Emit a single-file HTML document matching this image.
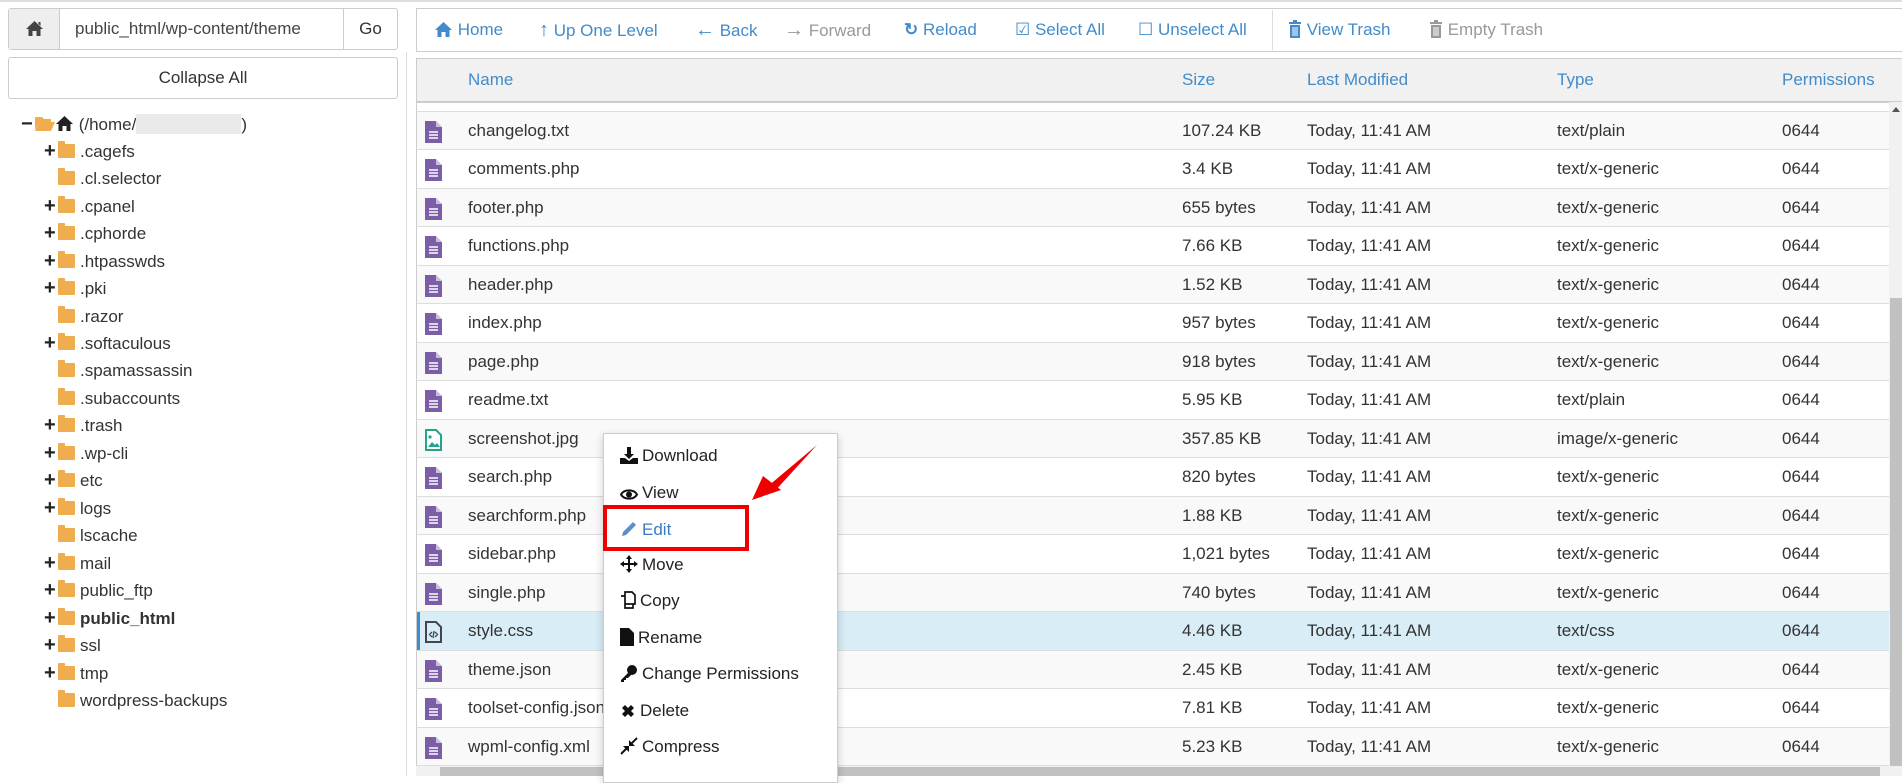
<!DOCTYPE html>
<html><head><meta charset="utf-8"><style>
*{box-sizing:border-box;margin:0;padding:0}
body{width:1902px;height:776px;overflow:hidden;background:#fff;font-family:"Liberation Sans",sans-serif;color:#333;position:relative;font-size:17px}
.a{position:absolute}
.topline{left:0;top:0;width:1902px;height:2px;background:#ddd}
.ig{left:8px;top:8px;width:390px;height:42px;border:1px solid #ccc;border-radius:3px;background:#fff}
.btn{left:8px;top:57px;width:390px;height:42px;border:1px solid #ccc;border-radius:3px;text-align:center;line-height:40px}
.tree div{position:absolute;height:27px;line-height:27px;white-space:nowrap}
.fold{display:inline-block;width:17px;height:14px;background:#f0ad4e;border-radius:1px;vertical-align:-1px;margin-right:5px;position:relative}
.fold:before{content:"";position:absolute;left:0;top:-3px;width:7px;height:4px;background:#f0ad4e;border-radius:1px 1px 0 0}
.pl{display:inline-block;width:14px;font-weight:bold;font-size:20px;color:#222}
.tb{left:416px;top:8px;width:1486px;height:44px;border:1px solid #ccc;border-right:none}
.tb span{position:absolute;top:0;line-height:42px;color:#428bca;white-space:nowrap}
.tb span.g{color:#999}
.tb svg{vertical-align:-3px}
.hdr{left:416px;top:58px;width:1486px;height:45px;background:#f1f1f1;border:1px solid #ccc;border-right:none;border-bottom:2px solid #ccc}
.hdr span{position:absolute;top:0;line-height:42px;color:#428bca}
.row{position:absolute;left:416px;width:1473px;height:38.5px;border-bottom:1px solid #ddd;border-left:1px solid #ccc}
.row span{position:absolute;line-height:38px;top:0;white-space:nowrap}
.fi{position:absolute;left:7px;top:9px}
.menu{left:603px;top:433px;width:235px;height:350px;background:#fff;border:1px solid #ccc;box-shadow:0 3px 8px rgba(0,0,0,.2)}
.mi{position:absolute;left:16px;white-space:nowrap;line-height:36px;height:36px;color:#222}
.mi i{display:inline-block;width:22px;font-style:normal;font-size:17px;font-weight:bold;color:#111}
.mi svg{vertical-align:-3px;margin-right:4px}
</style></head><body>
<div class="a topline"></div>
<div class="a ig">
 <div class="a" style="left:0;top:0;width:51px;height:40px;background:#eee;border-right:1px solid #ccc"></div>
 <svg class="a" style="left:16px;top:11px" width="19" height="17" viewBox="0 0 19 17"><path d="M9.5 1 L1 9 H3.5 V16 H7.5 V11 H11.5 V16 H15.5 V9 H18 Z M13.5 2 H15.5 V6 L13.5 4Z" fill="#444"/></svg>
 <div class="a" style="left:66px;top:0;line-height:40px;width:276px;overflow:hidden;white-space:nowrap;color:#444">public_html/wp-content/theme</div>
 <div class="a" style="left:334px;top:0;width:54px;height:40px;border-left:1px solid #ccc;line-height:40px;text-align:center">Go</div>
</div>
<div class="a btn">Collapse All</div>
<div class="a" style="left:406px;top:52px;width:1px;height:724px;background:#ddd"></div>
<div class="a tree" style="left:0;top:0">
 <div style="left:21px;top:111px"><span class="pl">−</span><svg width="20" height="15" viewBox="0 0 20 15" style="vertical-align:-1px"><path d="M0 1h7l2 2h7v3H4L0 14z" fill="#f0ad4e"/><path d="M4 6h16l-4 9H0z" fill="#f0ad4e"/></svg><svg width="19" height="17" viewBox="0 0 19 17" style="vertical-align:-2px"><path d="M9.5 1 L1 9 H3.5 V16 H7.5 V11 H11.5 V16 H15.5 V9 H18 Z" fill="#222"/></svg> (/home/<span style="display:inline-block;width:105px;height:20px;background:#eaeaea;vertical-align:-4px;position:static"></span>)</div>
 <div style="left:44px;top:138px"><span class="pl">+</span><span class="fold"></span>.cagefs</div>
 <div style="left:58px;top:165px"><span class="fold"></span>.cl.selector</div>
 <div style="left:44px;top:193px"><span class="pl">+</span><span class="fold"></span>.cpanel</div>
 <div style="left:44px;top:220px"><span class="pl">+</span><span class="fold"></span>.cphorde</div>
 <div style="left:44px;top:248px"><span class="pl">+</span><span class="fold"></span>.htpasswds</div>
 <div style="left:44px;top:275px"><span class="pl">+</span><span class="fold"></span>.pki</div>
 <div style="left:58px;top:303px"><span class="fold"></span>.razor</div>
 <div style="left:44px;top:330px"><span class="pl">+</span><span class="fold"></span>.softaculous</div>
 <div style="left:58px;top:357px"><span class="fold"></span>.spamassassin</div>
 <div style="left:58px;top:385px"><span class="fold"></span>.subaccounts</div>
 <div style="left:44px;top:412px"><span class="pl">+</span><span class="fold"></span>.trash</div>
 <div style="left:44px;top:440px"><span class="pl">+</span><span class="fold"></span>.wp-cli</div>
 <div style="left:44px;top:467px"><span class="pl">+</span><span class="fold"></span>etc</div>
 <div style="left:44px;top:495px"><span class="pl">+</span><span class="fold"></span>logs</div>
 <div style="left:58px;top:522px"><span class="fold"></span>lscache</div>
 <div style="left:44px;top:550px"><span class="pl">+</span><span class="fold"></span>mail</div>
 <div style="left:44px;top:577px"><span class="pl">+</span><span class="fold"></span>public_ftp</div>
 <div style="left:44px;top:605px;font-weight:bold"><span class="pl">+</span><span class="fold"></span>public_html</div>
 <div style="left:44px;top:632px"><span class="pl">+</span><span class="fold"></span>ssl</div>
 <div style="left:44px;top:660px"><span class="pl">+</span><span class="fold"></span>tmp</div>
 <div style="left:58px;top:687px"><span class="fold"></span>wordpress-backups</div>
</div>
<div class="a tb">
 <span style="left:17px"><svg width="19" height="17" viewBox="0 0 19 17"><path d="M9.5 1 L1 9 H3.5 V16 H7.5 V11 H11.5 V16 H15.5 V9 H18 Z" fill="#428bca"/></svg> Home</span>
 <span style="left:122px"><b style="font-size:20px">↑</b> Up One Level</span>
 <span style="left:278px"><b style="font-size:20px">←</b> Back</span>
 <span class="g" style="left:367px"><b style="font-size:20px">→</b> Forward</span>
 <span style="left:487px"><b>↻</b> Reload</span>
 <span style="left:598px">☑ Select All</span>
 <span style="left:721px">☐ Unselect All</span>
 <span style="left:855px;top:1px;width:1px;height:40px;background:#ddd"></span>
 <span style="left:871px"><svg width="14" height="19" viewBox="0 0 14 19"><path d="M1 3h12v2H1zM5 1h4v2H5zM2 6h10v13H2z" fill="#428bca"/><path d="M5 8v9M7 8v9M9 8v9" stroke="#fff"/></svg> View Trash</span>
 <span class="g" style="left:1012px"><svg width="14" height="19" viewBox="0 0 14 19"><path d="M1 3h12v2H1zM5 1h4v2H5zM2 6h10v13H2z" fill="#999"/><path d="M5 8v9M7 8v9M9 8v9" stroke="#fff"/></svg> Empty Trash</span>
</div>
<div class="a hdr"><span style="left:51px">Name</span><span style="left:765px">Size</span><span style="left:890px">Last Modified</span><span style="left:1140px">Type</span><span style="left:1365px">Permissions</span></div>
<div class="a" style="left:1889px;top:102px;width:13px;height:664px;background:#f1f1f1"></div>
<div class="a" style="left:1890px;top:298px;width:12px;height:468px;background:#c1c1c1"></div>
<div class="a" style="left:1892px;top:107px;border:4px solid transparent;border-bottom:5px solid #555;border-top:none"></div>
<div class="a" style="left:416px;top:103px;width:1473px;height:9px;border-left:1px solid #ccc;border-bottom:1px solid #ddd"></div>
<div id="rows"></div>
<div class="a" style="left:416px;top:766px;width:1486px;height:10px;background:#f1f1f1"></div>
<div class="a" style="left:440px;top:767px;width:1440px;height:9px;background:#c1c1c1"></div>
<script>
var d=[["changelog.txt","107.24 KB","text/plain"],["comments.php","3.4 KB","text/x-generic"],["footer.php","655 bytes","text/x-generic"],["functions.php","7.66 KB","text/x-generic"],["header.php","1.52 KB","text/x-generic"],["index.php","957 bytes","text/x-generic"],["page.php","918 bytes","text/x-generic"],["readme.txt","5.95 KB","text/plain"],["screenshot.jpg","357.85 KB","image/x-generic"],["search.php","820 bytes","text/x-generic"],["searchform.php","1.88 KB","text/x-generic"],["sidebar.php","1,021 bytes","text/x-generic"],["single.php","740 bytes","text/x-generic"],["style.css","4.46 KB","text/css"],["theme.json","2.45 KB","text/x-generic"],["toolset-config.json","7.81 KB","text/x-generic"],["wpml-config.xml","5.23 KB","text/x-generic"]];
var h="";
var doc='<svg class="fi" width="19" height="22" viewBox="0 0 19 22"><path d="M1 0h11l6 6v16H1z" fill="#7b5ea7"/><path d="M12 0v6h6" fill="#fff" opacity=".6"/><path d="M5 11h9M5 14h9M5 17h9" stroke="#fff" stroke-width="1.5"/></svg>';
var img='<svg class="fi" width="19" height="22" viewBox="0 0 19 22"><path d="M2 1h10l5 5v15H2z" fill="#fff" stroke="#26a18a" stroke-width="2"/><path d="M4 18l4-5 3 3 2-2 3 4z" fill="#26a18a"/><circle cx="6" cy="8" r="1.6" fill="#26a18a"/></svg>';
var css='<svg class="fi" width="19" height="22" viewBox="0 0 19 22"><path d="M2 1h10l5 5v15H2z" fill="none" stroke="#445" stroke-width="2"/><path d="M8 11l-2.5 2.5L8 16M11 11l2.5 2.5L11 16M10 10l-1 7" stroke="#445" stroke-width="1.3" fill="none"/></svg>';
for(var i=0;i<d.length;i++){var t=111.5+i*38.5;var st=d[i][0]=="style.css";var bg=st?"#d9edf7":(i%2==0?"#f9f9f9":"#fff");
var ic=d[i][0]=="screenshot.jpg"?img:(st?css:doc);
var bl=st?"box-shadow:inset 3px 0 0 #3a8fd0;":"";
h+='<div class="row" style="top:'+t+'px;background:'+bg+';'+bl+'">'+ic+'<span style="left:51px">'+d[i][0]+'</span><span style="left:765px">'+d[i][1]+'</span><span style="left:890px">Today, 11:41 AM</span><span style="left:1140px">'+d[i][2]+'</span><span style="left:1365px">0644</span></div>';}
document.getElementById("rows").innerHTML=h;
</script>
<div class="a menu">
 <div class="mi" style="top:4px"><svg width="18" height="17" viewBox="0 0 18 17"><path d="M7 0h4v7h3l-5 5-5-5h3z" fill="#111"/><path d="M0 11h5l4 3 4-3h5v6H0z" fill="#111"/></svg>Download</div>
 <div class="mi" style="top:41px"><svg width="18" height="13" viewBox="0 0 18 13"><path d="M1 6.5C4 1 14 1 17 6.5 14 12 4 12 1 6.5z" fill="none" stroke="#111" stroke-width="2"/><circle cx="9" cy="6.5" r="3" fill="#111"/></svg>View</div>
 <div class="mi" style="top:78px;color:#3a7bbf"><svg width="18" height="18" viewBox="0 0 18 18"><path d="M2 16l1-4L13 2l3 3L6 15z" fill="#5a8fc8"/></svg>Edit</div>
 <div class="mi" style="top:113px"><svg width="18" height="18" viewBox="0 0 18 18"><path d="M9 0l3 4H10v4h4V6l4 3-4 3v-2h-4v4h2l-3 4-3-4h2v-4H4v2L0 9l4-3v2h4V4H6z" fill="#111"/></svg>Move</div>
 <div class="mi" style="top:149px"><svg width="16" height="18" viewBox="0 0 16 18"><path d="M5 1h7l3 3v9H5z M1 5h4v12h8v-4" fill="none" stroke="#111" stroke-width="1.7"/></svg>Copy</div>
 <div class="mi" style="top:186px"><svg width="14" height="18" viewBox="0 0 14 18"><path d="M0 0h9l5 5v13H0z" fill="#111"/></svg>Rename</div>
 <div class="mi" style="top:222px"><svg width="18" height="18" viewBox="0 0 18 18"><circle cx="12" cy="6" r="5" fill="#111"/><path d="M9 8L1 16v2h3v-2h2v-2h2l3-3z" fill="#111"/></svg>Change Permissions</div>
 <div class="mi" style="top:259px"><svg width="16" height="16" viewBox="0 0 16 16"><path d="M2 5l3-3 3 3 3-3 3 3-3 3 3 3-3 3-3-3-3 3-3-3 3-3z" fill="#111"/></svg>Delete</div>
 <div class="mi" style="top:295px"><svg width="18" height="18" viewBox="0 0 18 18"><path d="M17 1L10 8M1 17l7-7" stroke="#111" stroke-width="2"/><path d="M9 3v6h6z M3 9h6v6z" fill="#111"/></svg>Compress</div>
</div>
<div class="a" style="left:603px;top:505px;width:146px;height:46px;border:4px solid #e00"></div>
<svg class="a" style="left:745px;top:440px" width="80" height="70" viewBox="0 0 80 70"><path d="M72 5 L22 47 L28 53 Z" fill="#e00"/><path d="M7 60 L18 36 L36 50 Z" fill="#e00"/></svg>
</body></html>
